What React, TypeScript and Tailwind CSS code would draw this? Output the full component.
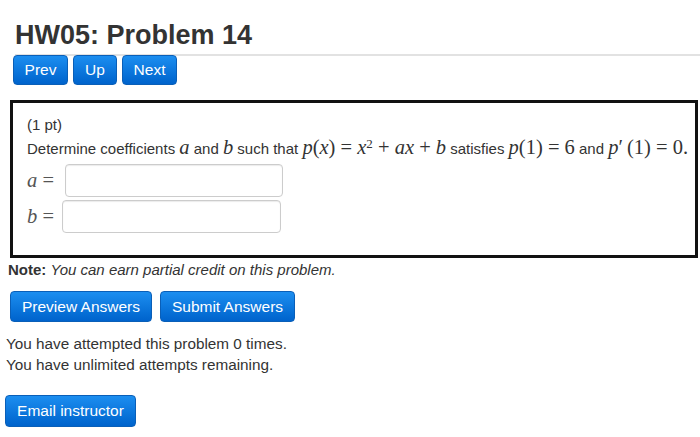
const btn =
  'inline-flex items-center justify-center rounded-[4px] border border-[#0a5fb8] bg-gradient-to-b from-[#1c8ef0] to-[#0063cc] text-white text-[15.5px] leading-none'

function V({ children }: { children: React.ReactNode }) {
  return <i className="font-['Liberation_Serif',serif] italic text-[20.5px]">{children}</i>
}

function M({ children }: { children: React.ReactNode }) {
  return <span className="font-['Liberation_Serif',serif] text-[20.5px]">{children}</span>
}

function Eq() {
  return <M>&nbsp;=&nbsp;</M>
}

export default function App() {
  return (
    <div className="h-[437px] w-[700px] overflow-hidden bg-white font-['Liberation_Sans',Arial,sans-serif] text-[#333]">
      <h1 className="pl-[15px] pt-[20px] text-[27px] font-bold leading-[30px] text-[#333]">
        HW05: Problem 14
      </h1>
      <div className="ml-[15px] mt-[4px] h-[2px] bg-[#e2e2e2]" />
      <div className="ml-[13px] -mt-[1px] flex gap-[5px]">
        <button className={`${btn} h-[30px] w-[55px]`}>Prev</button>
        <button className={`${btn} h-[30px] w-[44px]`}>Up</button>
        <button className={`${btn} h-[30px] w-[55px]`}>Next</button>
      </div>

      <div className="ml-[10px] mr-[2px] mt-[15px] h-[158px] border-[3px] border-[#111] pl-[14px] pt-[12px] text-[15px]">
        <div className="leading-[20px]">(1 pt)</div>
        <div className="flex items-baseline leading-[24px] whitespace-nowrap">
          <span>Determine coefficients&nbsp;</span>
          <V>a</V>
          <span>&nbsp;and&nbsp;</span>
          <V>b</V>
          <span>&nbsp;such that&nbsp;</span>
          <V>p</V>
          <M>(</M>
          <V>x</V>
          <M>)</M>
          <Eq />
          <V>x</V>
          <sup className="font-['Liberation_Serif',serif] text-[13px]">2</sup>
          <M>&nbsp;+&nbsp;</M>
          <V>ax</V>
          <M>&nbsp;+&nbsp;</M>
          <V>b</V>
          <span>&nbsp;satisfies&nbsp;</span>
          <V>p</V>
          <M>(1)</M>
          <Eq />
          <M>6</M>
          <span>&nbsp;and&nbsp;</span>
          <V>p</V>
          <M>′&thinsp;(1)</M>
          <Eq />
          <M>0.</M>
        </div>
        <div className="mt-[3px] flex flex-col gap-[3px]">
          <div className="flex items-center gap-[10px] text-[#555]">
            <span className="w-[28px] whitespace-nowrap">
              <V>a</V>
              <M>&nbsp;=</M>
            </span>
            <div className="h-[33px] w-[218px] rounded-[4px] border border-[#ccc] shadow-[inset_0_1px_1px_rgba(0,0,0,0.08)]" />
          </div>
          <div className="flex items-center gap-[7px] text-[#555]">
            <span className="w-[28px] whitespace-nowrap">
              <V>b</V>
              <M>&nbsp;=</M>
            </span>
            <div className="h-[33px] w-[219px] rounded-[4px] border border-[#ccc] shadow-[inset_0_1px_1px_rgba(0,0,0,0.08)]" />
          </div>
        </div>
      </div>

      <div className="ml-[8px] mt-[2px] text-[15px] leading-[20px]">
        <b>Note:</b> <i>You can earn partial credit on this problem.</i>
      </div>
      <div className="ml-[10px] mt-[11px] flex gap-[8px]">
        <button className={`${btn} h-[31px] w-[142px]`}>Preview Answers</button>
        <button className={`${btn} h-[31px] w-[135px]`}>Submit Answers</button>
      </div>
      <div className="ml-[6px] mt-[11px] text-[15.3px] leading-[21px]">
        <div>You have attempted this problem 0 times.</div>
        <div>You have unlimited attempts remaining.</div>
      </div>
      <button className={`${btn} ml-[5px] mt-[20px] h-[32px] w-[131px]`}>Email instructor</button>
    </div>
  )
}
